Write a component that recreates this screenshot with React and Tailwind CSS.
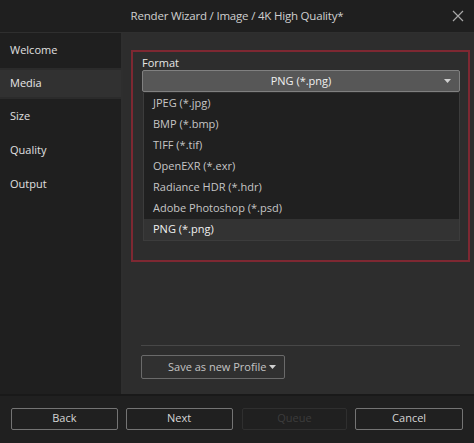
import React from 'react'

const navItems = ['Welcome', 'Media', 'Size', 'Quality', 'Output']
const formats = [
  'JPEG (*.jpg)',
  'BMP (*.bmp)',
  'TIFF (*.tif)',
  'OpenEXR (*.exr)',
  'Radiance HDR (*.hdr)',
  'Adobe Photoshop (*.psd)',
]

const Caret = () => (
  <svg width="7" height="4" viewBox="0 0 7 4" className="shrink-0">
    <path d="M0 0h7L3.5 4z" fill="#d0d0d0" />
  </svg>
)

const App = () => {
  return (
    <div
      className="w-[474px] h-[443px] flex flex-col bg-[#1f1f1f] text-[11px] text-[#d6d6d6] overflow-hidden"
      style={{ fontFamily: '"Open Sans", "Noto Sans", sans-serif' }}
    >
      {/* title bar */}
      <div className="h-[33px] shrink-0 relative flex items-center justify-center bg-[#1f1f1f] border-b border-[#2f2f2f]">
        <span className="text-[11.5px] text-[#cfcfcf] tracking-[-0.2px]">Render Wizard / Image / 4K High Quality*</span>
        <svg className="absolute right-[10px] top-[10px]" width="12" height="12" viewBox="0 0 12 12">
          <path d="M1 1l10 10M11 1L1 11" stroke="#a8a8a8" strokeWidth="1.2" />
        </svg>
      </div>

      <div className="flex flex-1 min-h-0">
        {/* sidebar */}
        <div className="w-[123px] shrink-0 bg-[#1f1f1f] border-r-2 border-[#2e2e2e] flex flex-col">
          {navItems.map((item) => (
            <div
              key={item}
              className={
                item === 'Media'
                  ? 'h-[31px] mt-[1px] flex items-center pl-[10px] bg-[#313131] border-y-2 border-[#2b2b2b] text-[#e8e8e8]'
                  : 'h-[34px] flex items-center pl-[10px] text-[#e0e0e0]'
              }
            >
              {item}
            </div>
          ))}
        </div>

        {/* content */}
        <div className="flex-1 bg-[#2d2d2d] flex flex-col pt-[17px] pl-[8px] pr-[4px] pb-[15px]">
          <div className="border-2 border-[#7e2832] pl-[9px] pr-[8px] pt-[3px] pb-[19px]">
            <div className="h-[15px] leading-[15px] text-[#e6e6e6]">Format</div>
            <div className="h-[22px] bg-[#575757] border border-[#808080] rounded-[2px] flex items-center relative">
              <span className="flex-1 text-center text-[#f0f0f0]">PNG (*.png)</span>
              <span className="absolute right-[8px] top-[8px]"><Caret /></span>
            </div>
            <div className="border border-t-0 border-[#3c3c3c] mt-[1px] ml-[1px]">
              <div className="bg-[#202020]">
                {formats.map((f) => (
                  <div key={f} className="h-[21px] flex items-center pl-[9px] text-[#c6c6c6]">
                    {f}
                  </div>
                ))}
              </div>
              <div className="h-[21px] flex items-center pl-[9px] bg-[#333333] text-[#f0f0f0]">PNG (*.png)</div>
            </div>
          </div>

          <div className="flex-1" />
          <div className="ml-[10px] mr-[10px] h-px bg-[#474747]" />
          <div className="ml-[10px] mt-[9px] w-[144px] h-[24px] border border-[#6a6a6a] rounded-[2px] bg-[#303030] flex items-center relative">
            <span className="pl-[26px] text-[#c4c4c4]">Save as new Profile</span>
            <span className="absolute right-[8px] top-[9px]"><Caret /></span>
          </div>
        </div>
      </div>

      {/* footer */}
      <div className="h-[49px] shrink-0 bg-[#202020] border-t-2 border-[#191919] flex items-center px-[11px] pb-[2px] gap-[8px]">
        <button className="w-[107px] h-[22px] border border-[#747474] rounded-[2px] text-[#d6d6d6]">Back</button>
        <button className="w-[107px] h-[22px] border border-[#747474] rounded-[2px] text-[#d6d6d6]">Next</button>
        <button className="w-[106px] h-[22px] border border-[#2f2f2f] rounded-[2px] text-[#3c3c3c] ml-[1px]">Queue</button>
        <button className="w-[108px] h-[22px] border border-[#747474] rounded-[2px] text-[#d6d6d6] ml-auto">Cancel</button>
      </div>
    </div>
  )
}

export default App
